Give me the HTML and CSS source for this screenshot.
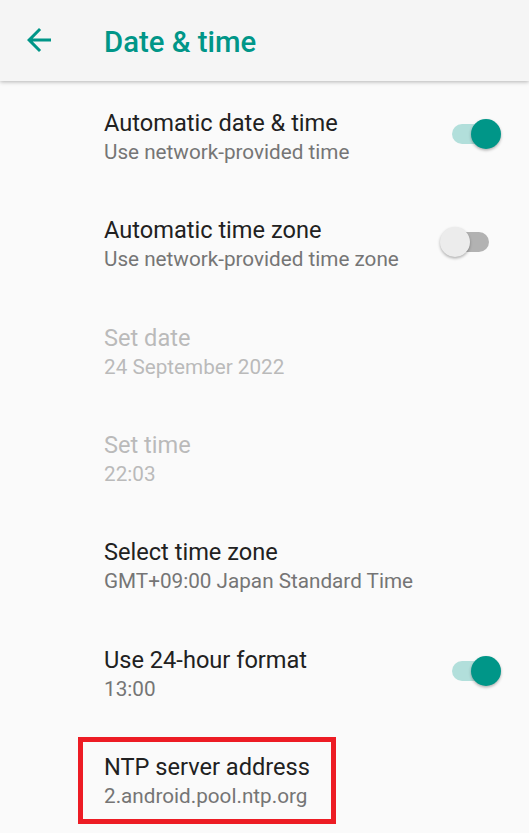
FILE: index.html
```html
<!DOCTYPE html>
<html>
<head>
<meta charset="utf-8">
<link rel="stylesheet" href="styles.css">
</head>
<body>
<header class="appbar">
  <svg class="back" viewBox="0 0 24 24" width="36" height="36"><path d="M20 11H7.83l5.59-5.59L12 4l-8 8 8 8 1.41-1.41L7.83 13H20v-2z" fill="#009688"/></svg>
  <h1 class="title">Date &amp; time</h1>
</header>
<main class="list">
  <div class="row">
    <div class="text"><div class="primary">Automatic date &amp; time</div><div class="secondary">Use network-provided time</div></div>
    <div class="switch on"><span class="track"></span><span class="thumb"></span></div>
  </div>
  <div class="row">
    <div class="text"><div class="primary">Automatic time zone</div><div class="secondary">Use network-provided time zone</div></div>
    <div class="switch"><span class="track"></span><span class="thumb"></span></div>
  </div>
  <div class="row disabled">
    <div class="text"><div class="primary">Set date</div><div class="secondary">24 September 2022</div></div>
  </div>
  <div class="row disabled">
    <div class="text"><div class="primary">Set time</div><div class="secondary">22:03</div></div>
  </div>
  <div class="row">
    <div class="text"><div class="primary">Select time zone</div><div class="secondary">GMT+09:00 Japan Standard Time</div></div>
  </div>
  <div class="row">
    <div class="text"><div class="primary">Use 24-hour format</div><div class="secondary">13:00</div></div>
    <div class="switch on"><span class="track"></span><span class="thumb"></span></div>
  </div>
  <div class="row highlighted">
    <div class="text"><div class="primary">NTP server address</div><div class="secondary">2.android.pool.ntp.org</div></div>
    <span class="redbox"></span>
  </div>
</main>
</body>
</html>
```

FILE: styles.css
```css
html, body {
  margin: 0;
  padding: 0;
  background: #fafafa;
  font-family: Roboto, "Noto Sans", sans-serif;
  overflow: hidden;
  height: 833px;
}
.appbar {
  height: 81px;
  background: #f5f5f5;
  box-shadow: 0 1px 4px rgba(0,0,0,0.28);
  display: flex;
  align-items: center;
  position: relative;
  z-index: 2;
}
.back {
  margin-left: 21px;
  margin-right: 47px;
  margin-top: -1px;
}
.title {
  margin: 0;
  font-size: 29.3px;
  font-weight: 500;
  color: #009688;
  margin-top: 2px;
}
.list {
  padding-top: 2.3px;
}
.row {
  height: 107.33px;
  display: flex;
  align-items: center;
  padding-left: 104px;
  padding-right: 28px;
  box-sizing: border-box;
  position: relative;
}
.text {
  flex: 1;
}
.primary {
  font-size: 23.6px;
  line-height: 30px;
  color: #212121;
}
.secondary {
  font-size: 20.7px;
  line-height: 28px;
  color: #757575;
}
.disabled .primary,
.disabled .secondary {
  color: #bababa;
}
.switch {
  position: relative;
  width: 61px;
  height: 30px;
  margin-bottom: 5px;
}
.track {
  position: absolute;
  left: 12px;
  top: 5px;
  width: 37px;
  height: 20px;
  border-radius: 10px;
  background: #b2b2b2;
}
.thumb {
  position: absolute;
  left: 0;
  top: 0;
  width: 30px;
  height: 30px;
  border-radius: 50%;
  background: #ececec;
  box-shadow: 0 1.5px 3px rgba(0,0,0,0.3);
}
.switch.on .track {
  background: #b2dfdb;
}
.switch.on .thumb {
  left: 31px;
  background: #009688;
}
.redbox {
  position: absolute;
  left: 78px;
  top: 9.7px;
  width: 258px;
  height: 87px;
  box-sizing: border-box;
  border: 5px solid #ed1c24;
}
```
